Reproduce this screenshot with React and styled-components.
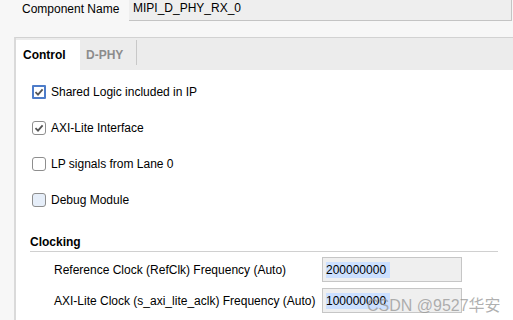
import React from 'react';
import styled, { createGlobalStyle } from 'styled-components';

const GlobalStyle = createGlobalStyle`
  html, body {
    margin: 0;
    padding: 0;
    background: #f7f7f7;
    overflow: hidden;
  }
  body {
    font-family: "Liberation Sans", Arial, sans-serif;
    font-size: 12px;
    color: #000;
  }
`;

const Page = styled.div`
  position: relative;
  width: 513px;
  height: 320px;
  overflow: hidden;
`;

const NameRow = styled.div`
  display: flex;
  align-items: center;
  height: 25px;
  margin-top: -4px;
  padding-left: 22px;
`;

const NameLabel = styled.div`
  width: 107px;
`;

const NameField = styled.div`
  flex: 1;
  height: 100%;
  box-sizing: border-box;
  display: flex;
  align-items: center;
  padding-left: 4px;
  margin-right: 1px;
  background: #eeeeee;
  border-right: 1px solid #c4c4c4;
  border-bottom: 1px solid #c4c4c4;
`;

const Panel = styled.div`
  margin-top: 16px;
  margin-left: 14px;
  border-top: 1px solid #d2d2d2;
  border-left: 2px solid #dadada;
  background: #fff;
  height: 300px;
`;

const TabBar = styled.div`
  display: flex;
  align-items: flex-end;
  height: 32px;
  background: #ececec;
`;

const Tab = styled.div`
  box-sizing: border-box;
  height: 30px;
  display: flex;
  align-items: center;
  padding-left: ${p => p.$pad}px;
  width: ${p => p.$w}px;
  font-weight: bold;
  color: ${p => (p.$active ? '#000' : '#8c8c8c')};
  background: ${p => (p.$active ? '#fff' : 'transparent')};
`;

const TabDivider = styled.div`
  width: 1px;
  height: 25px;
  align-self: flex-start;
  margin-top: 2px;
  background: #c8c8c8;
`;

const Body = styled.div`
  padding: 4px 0 0 16px;
`;

const CheckRow = styled.div`
  display: flex;
  align-items: center;
  gap: 5px;
  height: 36px;
`;

const Box = styled.div`
  box-sizing: border-box;
  width: 14px;
  height: 14px;
  border-radius: ${p => (p.$focus ? '1px' : '3px')};
  border: ${p => (p.$focus ? '2px solid #4d7cc9' : '1px solid #8e8e8e')};
  background: ${p => (p.$hover ? '#e6eef9' : '#fff')};
  display: flex;
  align-items: center;
  justify-content: center;
`;

const Section = styled.div`
  margin-top: 14px;
  margin-left: -2px;
  margin-right: 15px;
`;

const SectionTitle = styled.div`
  font-weight: bold;
  height: 19px;
  display: flex;
  align-items: center;
  border-bottom: 1px solid #d0d0d0;
`;

const FieldRows = styled.div`
  padding-top: 5px;
  padding-left: 24px;
  display: flex;
  flex-direction: column;
  gap: 6px;
`;

const FieldRow = styled.div`
  display: grid;
  grid-template-columns: 268px 140px;
  align-items: center;
`;

const ValueBox = styled.div`
  box-sizing: border-box;
  height: 25px;
  display: flex;
  align-items: center;
  padding-left: 3px;
  background: #efefef;
  border: 1px solid #c6c6c6;
`;

const Selected = styled.span`
  background: #cce0ff;
  line-height: 16px;
  padding-right: 4px;
`;

const Watermark = styled.div`
  position: absolute;
  left: 367px;
  top: 292px;
  font-family: "Liberation Sans", "Noto Sans CJK SC", sans-serif;
  font-size: 16px;
  color: rgba(150, 150, 150, 0.75);
  white-space: nowrap;
`;

const Check = () => (
  <svg width="10" height="10" viewBox="0 0 10 10">
    <path d="M1.5 5.2 L4 7.6 L8.6 2.4" fill="none" stroke="#555" strokeWidth="1.8" />
  </svg>
);

const options = [
  { label: 'Shared Logic included in IP', checked: true, focus: true },
  { label: 'AXI-Lite Interface', checked: true },
  { label: 'LP signals from Lane 0', checked: false },
  { label: 'Debug Module', checked: false, hover: true },
];

const clocks = [
  { label: 'Reference Clock (RefClk) Frequency (Auto)', value: '200000000' },
  { label: 'AXI-Lite Clock (s_axi_lite_aclk) Frequency (Auto)', value: '100000000' },
];

export default function App() {
  return (
    <Page>
      <GlobalStyle />
      <NameRow>
        <NameLabel>Component Name</NameLabel>
        <NameField>MIPI_D_PHY_RX_0</NameField>
      </NameRow>
      <Panel>
        <TabBar>
          <Tab $active $w={64} $pad={7}>Control</Tab>
          <Tab $w={56} $pad={6}>D-PHY</Tab>
          <TabDivider />
        </TabBar>
        <Body>
          {options.map(o => (
            <CheckRow key={o.label}>
              <Box $focus={o.focus} $hover={o.hover}>{o.checked && <Check />}</Box>
              <span>{o.label}</span>
            </CheckRow>
          ))}
          <Section>
            <SectionTitle>Clocking</SectionTitle>
            <FieldRows>
              {clocks.map(c => (
                <FieldRow key={c.label}>
                  <span>{c.label}</span>
                  <ValueBox><Selected>{c.value}</Selected></ValueBox>
                </FieldRow>
              ))}
            </FieldRows>
          </Section>
        </Body>
      </Panel>
      <Watermark>CSDN @9527华安</Watermark>
    </Page>
  );
}
